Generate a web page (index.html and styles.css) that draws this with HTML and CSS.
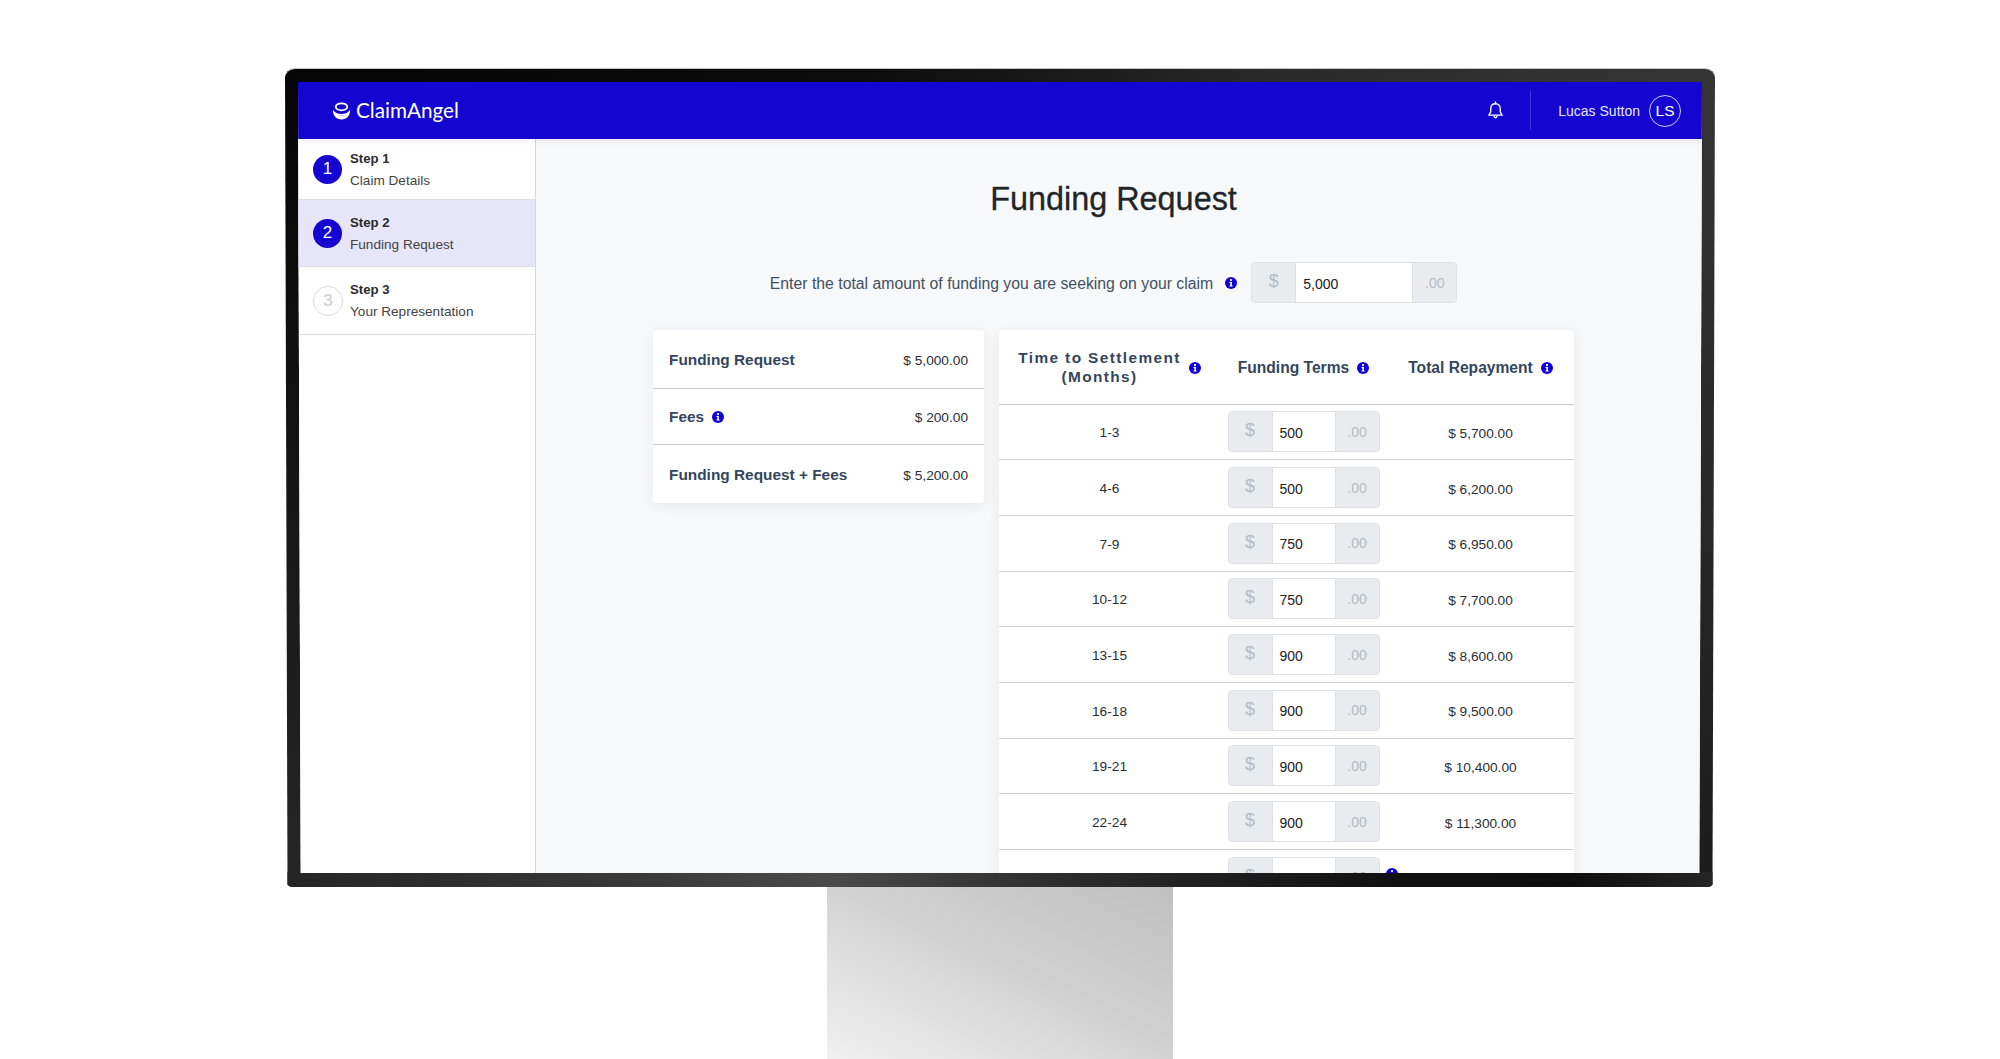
FILE: index.html
```html
<!DOCTYPE html>
<html lang="en">
<head>
  <meta charset="UTF-8">
  <meta name="viewport" content="width=device-width, initial-scale=1.0">
  <title>Funding Request</title>
  <link rel="stylesheet" href="styles.css">
</head>
<body>
  <svg class="sprite" aria-hidden="true">
    <symbol id="info" viewBox="0 0 12 12">
      <circle cx="6" cy="6" r="6" fill="#1000d6"/>
      <circle cx="6" cy="3.1" r="1.15" fill="#fff"/>
      <path d="M4.5 5h2.4v3.6h.7v1H4.5v-1h.8V6h-.8z" fill="#fff"/>
    </symbol>
  </svg>

  <div class="monitor">
    <div class="screen">
      <header class="topbar">
        <div class="brand">
          <svg class="brand-icon" viewBox="0 0 18 18">
            <ellipse cx="9" cy="4.600" rx="6.100" ry="3.700" fill="none" stroke="#fff" stroke-width="2"/>
            <path d="M0 7.600c1.500 3 4.800 4.600 9 4.600s7.500-1.600 9-4.600c.5 6-3.400 10.400-9 10.400S-.5 13.600 0 7.600z" fill="#fff"/>
            <path d="M4.500 12.600c1.400.5 2.900.7 4.500.7s3.100-.2 4.500-.7c-1 1.200-2.700 1.900-4.500 1.900s-3.500-.7-4.500-1.900z" fill="#c9c6f2"/>
          </svg>
          <span class="brand-name">ClaimAngel</span>
        </div>
        <div class="topbar-right">
          <svg class="bell" viewBox="0 0 16 18">
            <path d="M8 2.600c-2.900 0-4.500 2.200-4.500 4.900v2.800L1.700 13.400h12.600l-1.800-3.100V7.500c0-2.700-1.600-4.900-4.500-4.900z" fill="none" stroke="#fff" stroke-width="1.300" stroke-linejoin="round"/>
            <path d="M8 .8v1.800M6.500 14.200c.2 1.100.8 1.700 1.500 1.700s1.300-.6 1.500-1.700" fill="none" stroke="#fff" stroke-width="1.300" stroke-linecap="round"/>
          </svg>
          <div class="user">
            <span class="user-name">Lucas Sutton</span>
            <span class="avatar">LS</span>
          </div>
        </div>
      </header>

      <div class="app-body">
        <aside class="sidebar">
          <div class="step step-first">
            <span class="step-num">1</span>
            <div class="step-text"><strong>Step 1</strong><span>Claim Details</span></div>
          </div>
          <div class="step step-active">
            <span class="step-num">2</span>
            <div class="step-text"><strong>Step 2</strong><span>Funding Request</span></div>
          </div>
          <div class="step step-last">
            <span class="step-num step-todo">3</span>
            <div class="step-text"><strong>Step 3</strong><span>Your Representation</span></div>
          </div>
        </aside>

        <main class="content">
          <h1>Funding Request</h1>

          <div class="amount-row">
            <span class="amount-label">Enter the total amount of funding you are seeking on your claim</span>
            <svg class="info info-amount"><use href="#info"/></svg>
            <div class="input-group input-wide">
              <span class="addon addon-dollar">$</span>
              <span class="input-value">5,000</span>
              <span class="addon">.00</span>
            </div>
          </div>

          <div class="cards">
            <section class="card summary">
              <div class="summary-row row-a"><span class="summary-label">Funding Request</span><span class="money">$ 5,000.00</span></div>
              <div class="summary-row row-b"><span class="summary-label">Fees <svg class="info info-fees"><use href="#info"/></svg></span><span class="money">$ 200.00</span></div>
              <div class="summary-row row-c"><span class="summary-label">Funding Request + Fees</span><span class="money">$ 5,200.00</span></div>
            </section>

            <section class="card terms">
              <div class="terms-head">
                <div class="head-cell head-first"><span class="spaced">Time to Settlement<br>(Months)</span><svg class="info"><use href="#info"/></svg></div>
                <div class="head-cell"><span>Funding Terms</span><svg class="info"><use href="#info"/></svg></div>
                <div class="head-cell"><span>Total Repayment</span><svg class="info"><use href="#info"/></svg></div>
              </div>

              <div class="terms-row">
                <span class="cell-months">1-3</span>
                <div class="input-group"><span class="addon addon-dollar">$</span><span class="input-value">500</span><span class="addon">.00</span></div>
                <span class="money cell-total">$ 5,700.00</span>
              </div>
              <div class="terms-row">
                <span class="cell-months">4-6</span>
                <div class="input-group"><span class="addon addon-dollar">$</span><span class="input-value">500</span><span class="addon">.00</span></div>
                <span class="money cell-total">$ 6,200.00</span>
              </div>
              <div class="terms-row">
                <span class="cell-months">7-9</span>
                <div class="input-group"><span class="addon addon-dollar">$</span><span class="input-value">750</span><span class="addon">.00</span></div>
                <span class="money cell-total">$ 6,950.00</span>
              </div>
              <div class="terms-row">
                <span class="cell-months">10-12</span>
                <div class="input-group"><span class="addon addon-dollar">$</span><span class="input-value">750</span><span class="addon">.00</span></div>
                <span class="money cell-total">$ 7,700.00</span>
              </div>
              <div class="terms-row">
                <span class="cell-months">13-15</span>
                <div class="input-group"><span class="addon addon-dollar">$</span><span class="input-value">900</span><span class="addon">.00</span></div>
                <span class="money cell-total">$ 8,600.00</span>
              </div>
              <div class="terms-row">
                <span class="cell-months">16-18</span>
                <div class="input-group"><span class="addon addon-dollar">$</span><span class="input-value">900</span><span class="addon">.00</span></div>
                <span class="money cell-total">$ 9,500.00</span>
              </div>
              <div class="terms-row">
                <span class="cell-months">19-21</span>
                <div class="input-group"><span class="addon addon-dollar">$</span><span class="input-value">900</span><span class="addon">.00</span></div>
                <span class="money cell-total">$ 10,400.00</span>
              </div>
              <div class="terms-row">
                <span class="cell-months">22-24</span>
                <div class="input-group"><span class="addon addon-dollar">$</span><span class="input-value">900</span><span class="addon">.00</span></div>
                <span class="money cell-total">$ 11,300.00</span>
              </div>
              <div class="terms-row">
                <span class="cell-months">25-27</span>
                <div class="input-group"><span class="addon addon-dollar">$</span><span class="input-value">900</span><span class="addon">.00</span></div>
                <span class="money cell-total"><svg class="info info-peek"><use href="#info"/></svg>$ 12,200.00</span>
              </div>
            </section>
          </div>
        </main>
      </div>
    </div>
  </div>

  <div class="stand"></div>
</body>
</html>
```

FILE: styles.css
```css
* {
  box-sizing: border-box;
}

html, body {
  height: 100%;
}

body {
  margin: 0;
  background: #fff;
  font-family: "Liberation Sans", Arial, sans-serif;
  color: #222;
  overflow: hidden;
}

.sprite {
  display: none;
}

/* monitor frame: top and bottom strips, then the two sides */
.monitor {
  width: 1430px;
  height: 819px;
  margin: 68px auto 0;
  padding: 13px 13px 14px;
  border-radius: 10px 10px 8px 8px;
  border-top: 1px solid #c4c4c4;
  background:
    linear-gradient(90deg, #050505 0%, #0c0c0c 40%, #2a2a2a 70%, #353535 100%) top / 100% 14px no-repeat,
    linear-gradient(90deg, #252525 0%, #3a3a3a 25%, #4a4a4a 38%, #2c2c2c 55%, #101010 78%, #0e0e0e 90%, #262626 100%) bottom / 100% 15px no-repeat,
    linear-gradient(180deg, #050505 0%, #262626 100%) left / 16px 100% no-repeat,
    linear-gradient(180deg, #353535 0%, #1c1c1c 100%) right / 16px 100% no-repeat;
  clip-path: polygon(0 0, 100% 0, calc(100% - 2.500px) 100%, 2.500px 100%);
}

.screen {
  height: 100%;
  display: flex;
  flex-direction: column;
  background: #fff;
  overflow: hidden;
  clip-path: polygon(0 0, 100% 0, calc(100% - 2.700px) 100%, 2.700px 100%);
}

.stand {
  width: 346px;
  height: 172px;
  margin: 0 auto;
  background: linear-gradient(to bottom left, #c0c0c0 0%, #d0d0d0 45%, #dfdfdf 70%, #eff0ef 100%);
}

/* top bar */
.topbar {
  flex: 0 0 57px;
  display: flex;
  align-items: center;
  justify-content: space-between;
  padding: 0 21px 0 35px;
  background: #1406d0;
  color: #fff;
  box-shadow: 0 2px 6px rgba(0, 0, 0, 0.08);
  position: relative;
}

.brand {
  display: flex;
  align-items: center;
  gap: 6px;
}

.brand-icon {
  width: 17px;
  height: 18px;
}

.brand-name {
  font-family: Lato, sans-serif;
  font-size: 20.700px;
  line-height: 24px;
  padding-bottom: 2px;
}

.topbar-right {
  display: flex;
  align-items: center;
  height: 100%;
}

.bell {
  width: 17px;
  height: 19px;
  margin-right: 26px;
}

.user {
  height: 39px;
  display: flex;
  align-items: center;
  gap: 9px;
  padding-left: 27px;
  border-left: 1px solid #3f33dc;
}

.user-name {
  font-size: 14px;
  color: #e6e5fb;
}

.avatar {
  width: 32px;
  height: 32px;
  display: flex;
  align-items: center;
  justify-content: center;
  border: 1px solid #cfccf6;
  border-radius: 50%;
  font-size: 15.500px;
}

/* sidebar */
.app-body {
  flex: 1;
  display: flex;
  min-height: 0;
}

.sidebar {
  flex: 0 0 238px;
  background: #fff;
  border-right: 1px solid #d6d7dc;
}

.step {
  height: 67px;
  display: flex;
  align-items: center;
  gap: 8px;
  padding-left: 15px;
  border-bottom: 1px solid #dcdde4;
}

.step-first {
  height: 61px;
}

.step-active {
  background: #e7e6f9;
}

.step-last {
  height: 68px;
}

.step-num {
  flex: 0 0 29px;
  height: 29px;
  display: flex;
  align-items: center;
  justify-content: center;
  border-radius: 50%;
  background: #1406d0;
  color: #fff;
  font-size: 17px;
}

.step-todo {
  flex-basis: 30px;
  height: 30px;
  margin-right: -1px;
  background: #fff;
  border: 1px solid #d9dbe2;
  color: #c9cbd0;
}

.step-text {
  display: flex;
  flex-direction: column;
  padding-top: 1px;
  font-size: 13.600px;
  line-height: 22px;
  color: #444;
}

.step-text strong {
  font-size: 13.200px;
  color: #2b2b2b;
}

/* main column */
.content {
  flex: 1;
  min-width: 0;
  padding: 41px 11px 0 0;
  display: flex;
  flex-direction: column;
  align-items: center;
  background: #f7f8fa;
  overflow: hidden;
}

h1 {
  margin: 0;
  font-size: 32.400px;
  line-height: 38px;
  font-weight: 400;
  color: #212529;
  -webkit-text-stroke: 0.3px #212529;
}

.amount-row {
  margin-top: 44px;
  display: flex;
  align-items: center;
}

.amount-label {
  padding-top: 2px;
  font-size: 15.800px;
  color: #44505f;
}

.info {
  flex: none;
  width: 12px;
  height: 12px;
  margin-left: 8px;
}

.info-amount {
  margin: 0 14px 0 12px;
}

.input-group {
  display: flex;
  width: 152px;
  height: 41px;
  border: 1px solid #dde0e4;
  border-radius: 4px;
  background: #fff;
  overflow: hidden;
  font-size: 14px;
}

.input-wide {
  width: 206px;
}

.addon {
  flex: 0 0 44px;
  display: flex;
  align-items: center;
  justify-content: center;
  background: #e9ecef;
  color: #b6babe;
}

.input-group .addon:first-child {
  border-right: 1px solid #dde0e4;
}

.input-group .addon:last-child {
  border-left: 1px solid #dde0e4;
}

.addon-dollar {
  font-size: 18px;
  padding-bottom: 2px;
}

.input-value {
  flex: 1;
  display: flex;
  align-items: center;
  padding: 2px 0 0 7px;
  color: #222;
}

/* cards */
.cards {
  margin-top: 27px;
  display: flex;
  align-items: flex-start;
  gap: 15px;
}

.card {
  background: #fff;
  border-radius: 4px;
  box-shadow: 0 3px 14px rgba(30, 40, 60, 0.07);
}

.summary {
  width: 331px;
}

.summary-row {
  display: flex;
  align-items: center;
  justify-content: space-between;
  padding: 0 16px;
  border-bottom: 1.500px solid #c6c8ca;
}

.row-a {
  height: 59px;
}

.row-b {
  height: 56px;
}

.row-c {
  height: 58px;
  border-bottom: 0;
}

.summary-label {
  display: flex;
  align-items: center;
  padding-top: 2px;
  font-size: 15.400px;
  font-weight: 700;
  color: #34465c;
}

.row-b .summary-label {
  padding-top: 0;
}

.money {
  padding-top: 3px;
  font-size: 13.700px;
  color: #2b2f33;
}

.row-b .money {
  padding-top: 1px;
}

.terms {
  width: 575px;
}

.terms-head,
.terms-row {
  display: grid;
  grid-template-columns: 221px 167px 187px;
  align-items: center;
}

.terms-head {
  height: 74.500px;
  border-bottom: 1.500px solid #c6c8ca;
}

.head-cell {
  display: flex;
  align-items: center;
  justify-content: center;
  padding-top: 2px;
  font-size: 15.600px;
  font-weight: 700;
  color: #34465c;
}

.spaced {
  font-size: 15.400px;
  text-align: center;
  line-height: 18.500px;
  letter-spacing: 1.400px;
}

.terms-row {
  height: 55.700px;
  border-bottom: 1.500px solid #cfd1d3;
  justify-items: center;
}

.cell-months {
  padding-top: 2px;
  font-size: 13.700px;
  color: #2b2f33;
}

.cell-total {
  position: relative;
  display: block;
  width: 100%;
  text-align: center;
}

.info-peek {
  position: absolute;
  left: -1px;
  top: 0;
  margin: 0;
}
```
